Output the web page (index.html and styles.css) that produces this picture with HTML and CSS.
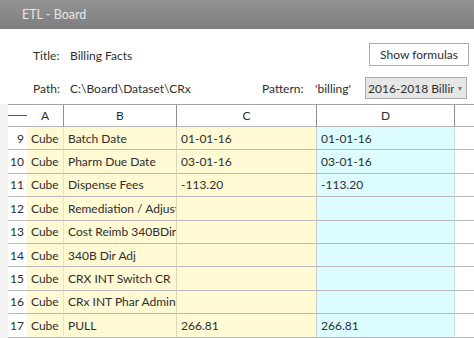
FILE: index.html
```html
<!DOCTYPE html>
<html lang="en">
<head>
    <meta charset="UTF-8">
    <title>ETL - Board</title>
    <link rel="stylesheet" href="styles.css">
</head>
<body>
    <div class="titlebar">ETL - Board</div>
    <div class="form">
        <div class="form-row first">
            <span class="label">Title:</span>
            <span class="value">Billing Facts</span>
            <button class="btn">Show formulas</button>
        </div>
        <div class="form-row second">
            <span class="label">Path:</span>
            <span class="value">C:\Board\Dataset\CRx</span>
            <span class="pattern-label">Pattern:</span>
            <span class="pattern-value">'billing'</span>
            <div class="select"><span class="select-text">2016-2018 Billing Facts</span><span class="arrow">&#9662;</span></div>
        </div>
    </div>
    <div class="sheet-wrap">
        <div class="sheet">
            <div class="hd num"><span class="dash"></span></div>
            <div class="hd col-a">A</div>
            <div class="hd col-b">B</div>
            <div class="hd col-c">C</div>
            <div class="hd col-d">D</div>
            <div class="hd col-e"></div>

            <div class="cell num">9</div><div class="cell y a">Cube</div><div class="cell y b">Batch Date</div><div class="cell y c">01-01-16</div><div class="cell d">01-01-16</div><div class="cell e"></div>
            <div class="cell num">10</div><div class="cell y a">Cube</div><div class="cell y b">Pharm Due Date</div><div class="cell y c">03-01-16</div><div class="cell d">03-01-16</div><div class="cell e"></div>
            <div class="cell num">11</div><div class="cell y a">Cube</div><div class="cell y b">Dispense Fees</div><div class="cell y c">-113.20</div><div class="cell d">-113.20</div><div class="cell e"></div>
            <div class="cell num">12</div><div class="cell y a">Cube</div><div class="cell y b">Remediation / Adjustment</div><div class="cell y c"></div><div class="cell d"></div><div class="cell e"></div>
            <div class="cell num">13</div><div class="cell y a">Cube</div><div class="cell y b">Cost Reimb 340BDir</div><div class="cell y c"></div><div class="cell d"></div><div class="cell e"></div>
            <div class="cell num">14</div><div class="cell y a">Cube</div><div class="cell y b">340B Dir Adj</div><div class="cell y c"></div><div class="cell d"></div><div class="cell e"></div>
            <div class="cell num">15</div><div class="cell y a">Cube</div><div class="cell y b">CRX INT Switch CR</div><div class="cell y c"></div><div class="cell d"></div><div class="cell e"></div>
            <div class="cell num">16</div><div class="cell y a">Cube</div><div class="cell y b">CRx INT Phar Admin Fee</div><div class="cell y c"></div><div class="cell d"></div><div class="cell e"></div>
            <div class="cell num">17</div><div class="cell y a">Cube</div><div class="cell y b">PULL</div><div class="cell y c">266.81</div><div class="cell d">266.81</div><div class="cell e"></div>
        </div>
    </div>
</body>
</html>
```

FILE: styles.css
```css
body{
    margin: 0;
    padding: 0;
    background: #ffffff;
    font-family: Lato, "Noto Sans", sans-serif;
    font-size: 12px;
    color: #2e2e2e;
    overflow: hidden;
}
.titlebar{
    height: 29px;
    line-height: 30px;
    padding-left: 22px;
    background: linear-gradient(#939393, #7e7e7e);
    color: #e6e6e6;
    font-size: 12.5px;
}
.form{
    padding: 14px 5px 0 33px;
}
.form-row{
    display: flex;
    align-items: center;
}
.form-row.first{
    height: 23px;
    padding-top: 1px;
}
.form-row.second{
    height: 22px;
    margin-top: 10px;
    padding-right: 2px;
}
.label{
    width: 37px;
}
.btn{
    margin-left: auto;
    margin-top: -2px;
    width: 100px;
    height: 23px;
    background: #ffffff;
    border: 1px solid #acacac;
    font-family: inherit;
    font-size: 12px;
    color: #2e2e2e;
    padding: 0;
}
.pattern-label{
    margin-left: auto;
    width: 53px;
}
.pattern-value{
    width: 50px;
}
.select{
    width: 100px;
    height: 20px;
    border: 1px solid #acacac;
    background: #e6e6e6;
    display: flex;
    align-items: center;
    overflow: hidden;
}
.select-text{
    flex: 1;
    white-space: nowrap;
    overflow: hidden;
    padding-left: 2px;
}
.arrow{
    width: 12px;
    font-size: 8px;
    color: #777;
    text-align: center;
}
.sheet-wrap{
    margin-top: 5px;
    background: #f2f2f2;
    padding-left: 8px;
}
.sheet{
    display: grid;
    grid-template-columns: 19px 37px 113px 140px 138px 1fr;
    grid-template-rows: 22px;
    grid-auto-rows: 23.4px;
    border-top: 1px solid #a5a5a5;
    background: #ffffff;
}
.hd{
    background: #ffffff;
    border-bottom: 1px solid #b5b5b5;
    display: flex;
    align-items: center;
    justify-content: center;
}
.hd.col-a, .hd.col-b, .hd.col-c, .hd.col-d{
    border-right: 1px solid #8e8e8e;
}
.dash{
    width: 19px;
    border-top: 1px solid #555;
}
.hd.num{
    justify-content: flex-start;
}
.cell{
    border-bottom: 1px solid #b9b9b9;
    display: flex;
    align-items: center;
    white-space: nowrap;
    overflow: hidden;
    padding-left: 4px;
}
.cell.num{
    justify-content: flex-end;
    padding: 0 3px 0 0;
    background: #ffffff;
}
.cell.y{
    background: #fff9d4;
}
.cell.a{
    padding-left: 4px;
    border-right: 1px solid #e6e2c6;
}
.cell.b{
    border-right: 1px solid #d9d5bb;
}
.cell.c{
    border-right: 1px solid #c4ccc8;
}
.cell.d{
    background: #ddfcff;
    border-right: 1px solid #c8dcdc;
}
.cell.e{
    background: #ffffff;
}
```
